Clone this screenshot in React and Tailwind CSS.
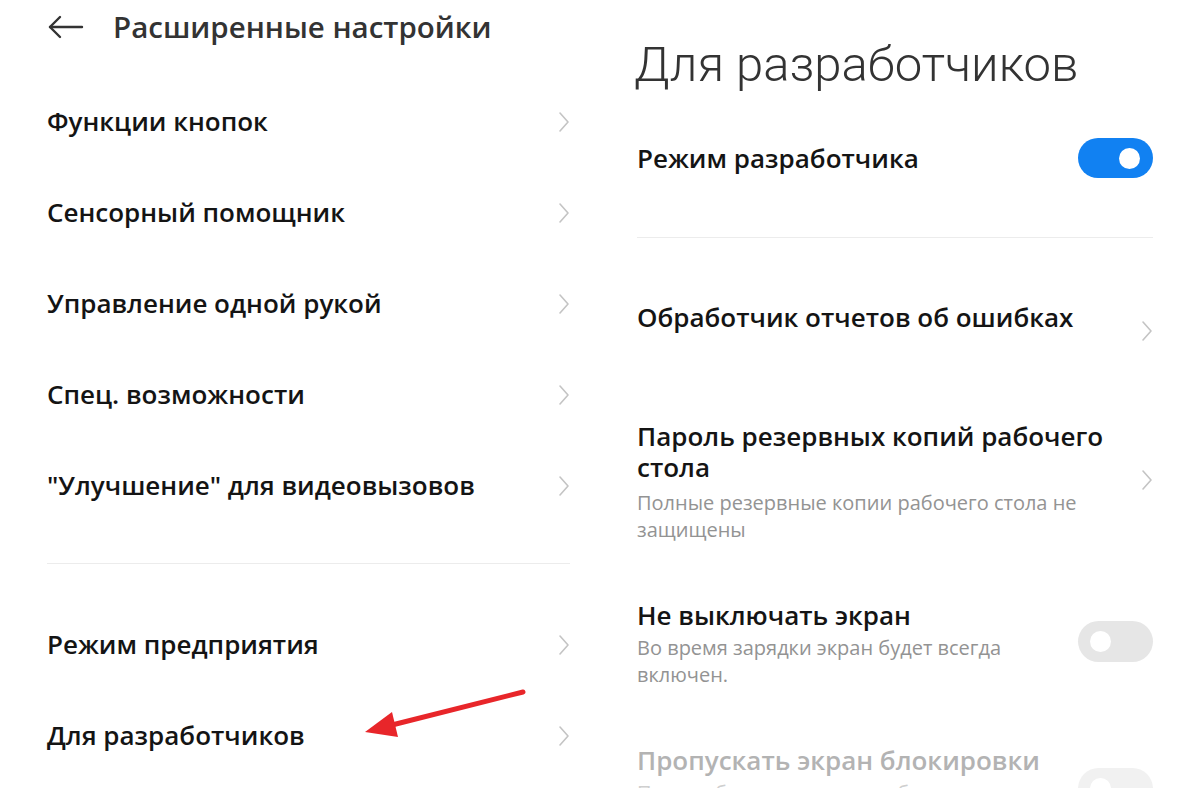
import React from "react";

const leftTop = [
  "Функции кнопок",
  "Сенсорный помощник",
  "Управление одной рукой",
  "Спец. возможности",
  "\"Улучшение\" для видеовызовов",
];

const leftBottom = ["Режим предприятия", "Для разработчиков"];

const body = { fontFamily: "'Open Sans', Roboto, sans-serif" };

function Chevron() {
  return (
    <svg width="12" height="22" viewBox="0 0 12 22" fill="none">
      <polyline
        points="2,2 10,11 2,20"
        stroke="#c4c4c4"
        strokeWidth="1.6"
        strokeLinecap="round"
        strokeLinejoin="round"
      />
    </svg>
  );
}

function Toggle({ on, faint }) {
  if (on) {
    return (
      <div className="w-[75px] h-[40px] rounded-full bg-[#1181f2] flex items-center justify-end pr-[13px]">
        <div className="w-[21px] h-[21px] rounded-full bg-white" />
      </div>
    );
  }
  return (
    <div
      className={`w-[75px] h-[41px] rounded-full flex items-center pl-[12px] ${
        faint ? "bg-[#f1f1f1]" : "bg-[#e6e6e6]"
      }`}
    >
      <div className="w-[21px] h-[21px] rounded-full bg-white" />
    </div>
  );
}

function LeftRow({ label }) {
  return (
    <div className="h-[91px] flex items-center justify-between">
      <span className="text-[26px] font-semibold text-[#141414]">{label}</span>
      <Chevron />
    </div>
  );
}

export default function App() {
  return (
    <div className="relative w-[1200px] h-[800px] bg-white flex overflow-hidden" style={body}>
      {/* left screen */}
      <div className="w-[600px] pl-[47px] pr-[30px]">
        <div className="h-[54px] flex items-center">
          <svg width="36" height="24" viewBox="0 0 36 24" fill="none" className="ml-[1px]">
            <line x1="2" y1="12" x2="34" y2="12" stroke="#333" strokeWidth="2.4" strokeLinecap="round" />
            <polyline points="12,2 2,12 12,22" stroke="#333" strokeWidth="2.4" strokeLinecap="round" strokeLinejoin="round" />
          </svg>
          <span className="ml-[29px] text-[29.5px] font-semibold text-[#333]">
            Расширенные настройки
          </span>
        </div>
        <div className="mt-[22px]">
          {leftTop.map((t) => (
            <LeftRow key={t} label={t} />
          ))}
        </div>
        <div className="mt-[32px] h-px bg-[#ececec]" />
        <div className="mt-[35px]">
          {leftBottom.map((t) => (
            <LeftRow key={t} label={t} />
          ))}
        </div>
      </div>

      {/* right screen */}
      <div className="w-[600px] h-[788px] overflow-hidden pl-[37px] pr-[47px]">
        <div
          className="mt-[38px] text-[49px] leading-[54px] font-light text-[#333] -ml-[3px]"
          style={{ fontFamily: "Roboto, sans-serif" }}
        >
          Для разработчиков
        </div>
        <div className="mt-[26px] h-[80px] flex items-center justify-between">
          <span className="text-[26px] font-semibold text-[#141414]">Режим разработчика</span>
          <Toggle on />
        </div>
        <div className="mt-[39px] h-px bg-[#ececec]" />

        <div className="mt-[64px] flex items-start justify-between">
          <span className="text-[26px] leading-[31px] font-semibold text-[#141414]">
            Обработчик отчетов об ошибках
          </span>
          <div className="mt-[18px]">
            <Chevron />
          </div>
        </div>

        <div className="mt-[79px] flex items-center justify-between">
          <div className="w-[485px]">
            <div className="text-[26px] leading-[31px] font-semibold text-[#141414]">
              Пароль резервных копий рабочего стола
            </div>
            <div className="mt-[6px] text-[20px] leading-[27px] text-[#939393]">
              Полные резервные копии рабочего стола не защищены
            </div>
          </div>
          <div className="mb-[4px]">
            <Chevron />
          </div>
        </div>

        <div className="mt-[57px] flex items-start justify-between">
          <div className="w-[430px]">
            <div className="text-[26px] leading-[31px] font-semibold text-[#141414]">
              Не выключать экран
            </div>
            <div className="mt-[3px] text-[20px] leading-[27px] text-[#939393]">
              Во время зарядки экран будет всегда включен.
            </div>
          </div>
          <div className="mt-[21px]">
            <Toggle />
          </div>
        </div>

        <div className="mt-[57px] flex items-start justify-between">
          <div className="w-[440px]">
            <div className="text-[26px] leading-[31px] font-semibold text-[#b3b3b3]">
              Пропускать экран блокировки
            </div>
            <div className="mt-[3px] text-[20px] leading-[27px] text-[#cfcfcf]">
              При разблокировке экран блокировки не будет показан
            </div>
          </div>
          <div className="mt-[23px]">
            <Toggle faint />
          </div>
        </div>
      </div>

      {/* red pointer arrow */}
      <svg
        className="absolute left-0 top-0 pointer-events-none"
        width="1200"
        height="800"
        viewBox="0 0 1200 800"
      >
        <line x1="523" y1="692" x2="388" y2="726" stroke="#e8262a" strokeWidth="5" strokeLinecap="round" />
        <polygon points="365,732 392,712 398,737" fill="#e8262a" />
      </svg>
    </div>
  );
}
